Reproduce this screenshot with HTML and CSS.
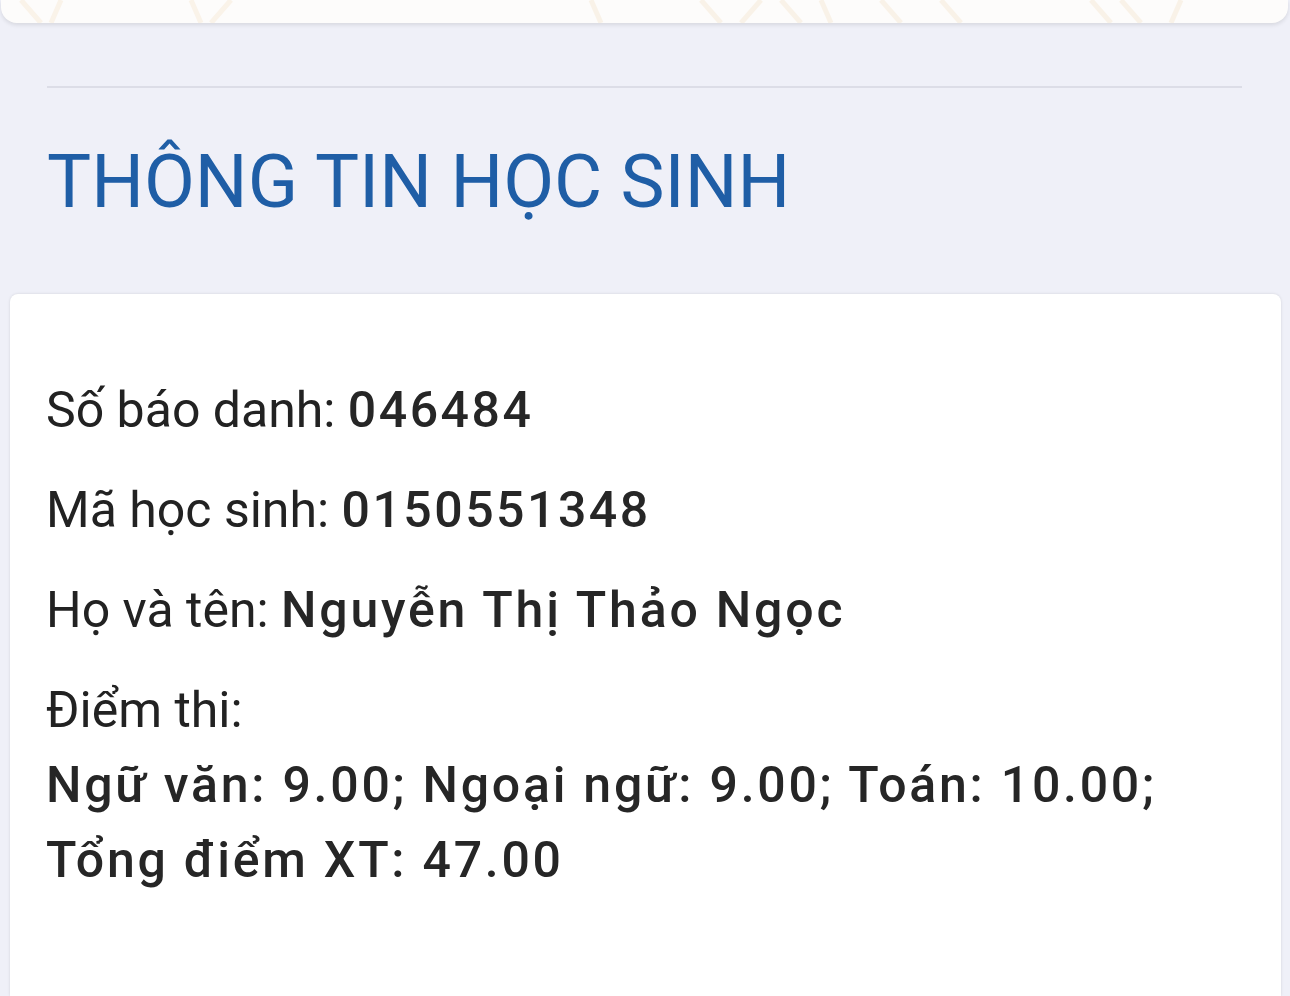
FILE: index.html
```html
<!DOCTYPE html>
<html lang="vi">
<head>
<meta charset="utf-8">
<link rel="stylesheet" href="styles.css">
</head>
<body>
<div class="top-card">
  <svg class="pattern" width="1288" height="23" viewBox="0 0 1288 23" preserveAspectRatio="none">
    <g fill="none" stroke="#f6e8d2" stroke-width="5">
      <path d="M20 0 L40 23 M60 0 L50 23 M190 0 L200 23 M230 0 L210 23"/>
      <path d="M590 0 L600 23 M700 0 L720 23 M760 0 L740 23 M780 0 L800 23 M820 0 L830 23 M880 0 L900 23 M940 0 L960 23"/>
      <path d="M1090 0 L1110 23 M1120 0 L1140 23 M1180 0 L1170 23 M1300 0 L1320 23 M1350 0 L1380 23 M1440 0 L1460 23"/>
    </g>
  </svg>
</div>
<main class="section">
  <div class="divider"></div>
  <h1 class="title">THÔNG TIN HỌC SINH</h1>
</main>
<section class="card">
  <p class="row first"><span class="label">Số báo danh: </span><span class="value">046484</span></p>
  <p class="row"><span class="label">Mã học sinh: </span><span class="value">0150551348</span></p>
  <p class="row"><span class="label">Họ và tên: </span><span class="value name">Nguyễn Thị Thảo Ngọc</span></p>
  <p class="row"><span class="label">Điểm thi:</span></p>
  <p class="scores">Ngữ văn: 9.00; Ngoại ngữ: 9.00; Toán: 10.00;<br>Tổng điểm XT: 47.00</p>
</section>
</body>
</html>
```
FILE: styles.css
```css
html, body {
  margin: 0;
  padding: 0;
}
body {
  background: #eff0f8;
  font-family: Roboto, "Noto Sans", sans-serif;
  color: #1d1d1f;
  height: 996px;
  overflow: hidden;
}
.top-card {
  height: 23px;
  margin: 0 2px 0 1px;
  background: #fdfcfb;
  border-radius: 0 0 16px 16px;
  box-shadow: 0 2px 4px rgba(0,0,0,0.10);
  overflow: hidden;
}
.pattern {
  display: block;
  opacity: 0.45;
}
.section {
  padding: 63px 48px 0 47px;
}
.divider {
  height: 2px;
  background: #dcdde7;
}
.title {
  margin: 50px 0 0 0;
  font-weight: 400;
  font-size: 74px;
  line-height: 88px;
  color: #1f5ea6;
  letter-spacing: 0;
}
.card {
  box-sizing: border-box;
  margin: 68px 9px 0 10px;
  background: #fff;
  border-radius: 8px 8px 0 0;
  box-shadow: 0 0 3px rgba(0,0,0,0.12);
  padding: 66px 36px 0 36px;
  height: 702px;
}
.row {
  margin: 0;
  font-size: 50px;
  line-height: 100px;
  height: 100px;
}
.label {
  font-weight: 400;
  color: #222;
}
.value {
  font-weight: 500;
  letter-spacing: 2.5px;
  color: #262626;
}
.value.name {
  letter-spacing: 2.8px;
}
.scores {
  margin: -12px 0 0 0;
  font-size: 50px;
  line-height: 75px;
  font-weight: 500;
  letter-spacing: 2.75px;
  color: #262626;
}
```
